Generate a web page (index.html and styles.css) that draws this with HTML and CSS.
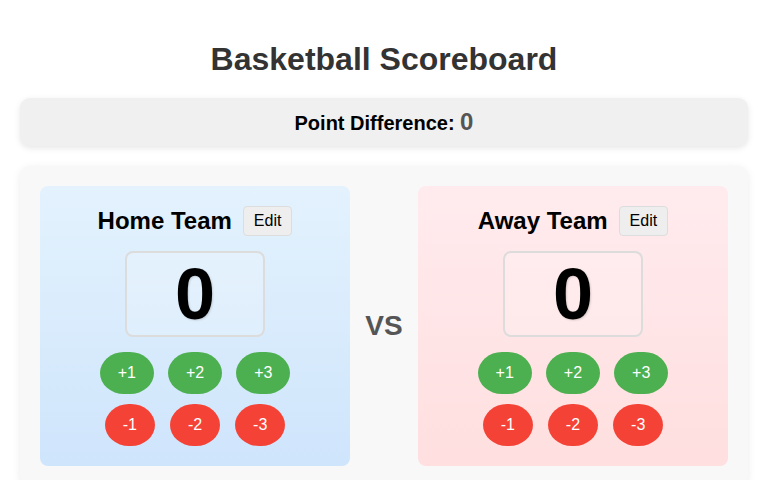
FILE: index.html
```html
<!DOCTYPE html>
<html lang="en">
<head>
<meta charset="utf-8">
<title>Basketball Scoreboard</title>
<link rel="stylesheet" href="styles.css">
</head>
<body>
<h1 class="title">Basketball Scoreboard</h1>
<div class="diff">Point Difference: <span class="diff-value">0</span></div>
<div class="board">
  <div class="team team-home">
    <div class="team-header">
      <span class="team-name">Home Team</span>
      <button class="edit-btn">Edit</button>
    </div>
    <div class="score">0</div>
    <div class="btn-row">
      <button class="pt-btn add">+1</button>
      <button class="pt-btn add">+2</button>
      <button class="pt-btn add">+3</button>
    </div>
    <div class="btn-row sub-row">
      <button class="pt-btn sub">-1</button>
      <button class="pt-btn sub">-2</button>
      <button class="pt-btn sub">-3</button>
    </div>
  </div>
  <div class="vs">VS</div>
  <div class="team team-away">
    <div class="team-header">
      <span class="team-name">Away Team</span>
      <button class="edit-btn">Edit</button>
    </div>
    <div class="score">0</div>
    <div class="btn-row">
      <button class="pt-btn add">+1</button>
      <button class="pt-btn add">+2</button>
      <button class="pt-btn add">+3</button>
    </div>
    <div class="btn-row sub-row">
      <button class="pt-btn sub">-1</button>
      <button class="pt-btn sub">-2</button>
      <button class="pt-btn sub">-3</button>
    </div>
  </div>
</div>
</body>
</html>
```
FILE: styles.css
```css
html, body {
  margin: 0;
  background: #ffffff;
}
body {
  padding: 20px;
  font-family: "Liberation Sans", Arial, sans-serif;
  color: #000;
}
.title {
  margin: 21px 0 20px;
  font-size: 32px;
  font-weight: bold;
  color: #333;
  text-align: center;
  line-height: 37px;
}
.diff {
  background: #f0f0f0;
  border-radius: 10px;
  box-shadow: 0 2px 6px rgba(0, 0, 0, 0.1);
  padding: 10px;
  text-align: center;
  font-size: 20px;
  font-weight: bold;
  height: 28px;
  line-height: 28px;
}
.diff-value {
  font-size: 24px;
  color: #555;
}
.board {
  margin-top: 20px;
  background: #f8f8f8;
  border-radius: 10px;
  box-shadow: 0 2px 8px rgba(0, 0, 0, 0.08);
  padding: 20px;
  display: flex;
  align-items: center;
  justify-content: space-between;
}
.team {
  width: 310px;
  box-sizing: border-box;
  padding: 20px 0 15px;
  border-radius: 8px;
  display: flex;
  flex-direction: column;
  align-items: center;
}
.team-home {
  background: linear-gradient(to bottom, #e3f2fd, #cfe5fc);
}
.team-away {
  background: linear-gradient(to bottom, #ffebee, #ffdfdf);
}
.team-header {
  display: flex;
  align-items: center;
  gap: 11px;
  height: 30px;
}
.team-name {
  font-size: 24px;
  font-weight: bold;
}
.edit-btn {
  font-family: "Liberation Sans", Arial, sans-serif;
  font-size: 16px;
  padding: 5px 10px;
  height: 30px;
  background: #eeeeee;
  border: 1px solid #dddddd;
  border-radius: 4px;
  color: #000;
  line-height: 18px;
}
.score {
  margin: 15px 0 10px;
  width: 140px;
  height: 86px;
  box-sizing: border-box;
  border: 2px solid #dcdcdc;
  border-radius: 8px;
  background: rgba(255, 255, 255, 0.2);
  font-size: 72px;
  font-weight: bold;
  text-align: center;
  line-height: 82px;
  text-shadow: 1px 1px 2px rgba(0, 0, 0, 0.15);
}
.btn-row {
  display: flex;
  justify-content: center;
  gap: 14px;
  margin: 5px 0;
}
.sub-row {
  gap: 15px;
}
.pt-btn {
  font-family: "Liberation Sans", Arial, sans-serif;
  font-size: 16px;
  color: #fff;
  border: none;
  height: 42px;
  padding: 0 18px;
  border-radius: 24px / 21px;
  line-height: 42px;
}
.add {
  background: #4caf50;
}
.sub {
  background: #f44336;
}
.vs {
  font-size: 28px;
  font-weight: bold;
  color: #555;
}
```
